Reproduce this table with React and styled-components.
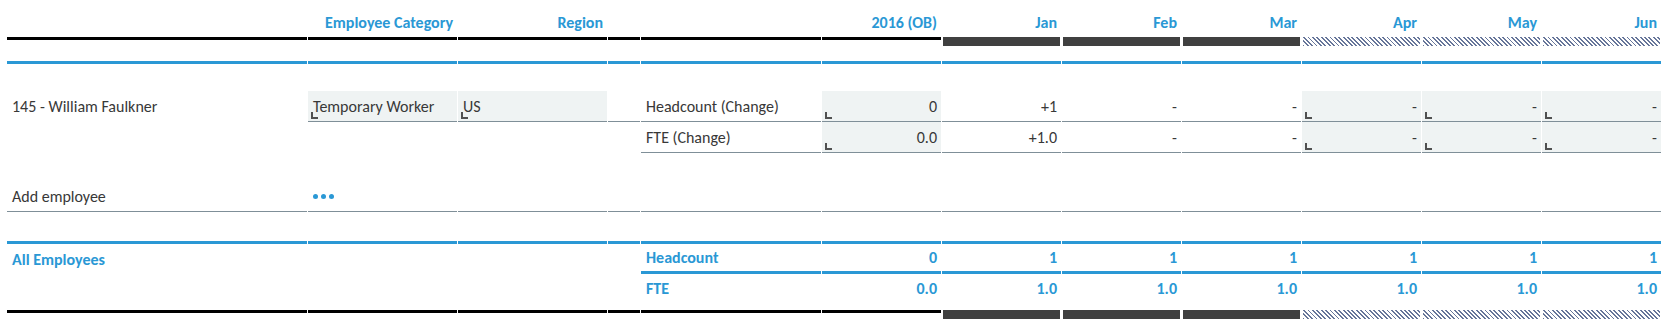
import React from "react";
import styled, { createGlobalStyle, css } from "styled-components";

const BLUE = "#2a98d5";
const COLS = "300px 149px 149px 32px 180px 119px repeat(6, 119px)";

const GlobalStyle = createGlobalStyle`
  body {
    margin: 0;
    background: #fff;
  }
`;

const Sheet = styled.div`
  display: flex;
  flex-direction: column;
  padding-left: 7px;
  font-family: Calibri, Carlito, Lato, "Liberation Sans", sans-serif;
  font-size: 16px;
  line-height: 19px;
  color: #383838;
`;

const Row = styled.div`
  display: grid;
  grid-template-columns: ${COLS};
  column-gap: 1px;
  height: ${(p) => p.$h}px;
  margin-top: ${(p) => p.$top || 0}px;
  align-items: start;
`;

const HeadCell = styled.div`
  display: flex;
  align-items: flex-end;
  justify-content: flex-end;
  height: 37px;
  padding: 0 4px 5px;
  box-sizing: border-box;
  font-weight: 700;
  color: ${BLUE};
  white-space: nowrap;
`;

const rules = {
  black: css`
    height: 3px;
    background: #000;
  `,
  blue: css`
    height: 3px;
    background: ${BLUE};
  `,
  solid: css`
    height: 9px;
    margin: 0 1px;
    background: #404040;
  `,
  hatch: css`
    height: 9px;
    margin: 0 1px;
    background: repeating-linear-gradient(
      45deg,
      #67769a 0 1.3px,
      #fff 1.3px 3.1px
    );
  `,
};

const Rule = styled.div`
  ${(p) => rules[p.$kind]}
`;

const lines = {
  grey: "1px solid #7f8f98",
  blue: `3px solid ${BLUE}`,
};

const Cell = styled.div`
  position: relative;
  display: flex;
  align-items: ${(p) => (p.$valign === "top" ? "flex-start" : "center")};
  justify-content: ${(p) => (p.$right ? "flex-end" : "flex-start")};
  height: 100%;
  box-sizing: border-box;
  padding: 0 ${(p) => (p.$right ? "4px" : "0")} 0
    ${(p) => (p.$right ? "0" : "5px")};
  background: ${(p) => (p.$input ? "#eff3f3" : "transparent")};
  border-bottom: ${(p) => (p.$line ? lines[p.$line] : "none")};
  font-weight: ${(p) => (p.$total ? 700 : 400)};
  color: ${(p) => (p.$total ? BLUE : "#383838")};
  white-space: nowrap;
`;

const Corner = styled.span`
  position: absolute;
  left: 3px;
  bottom: 2px;
  width: 5px;
  height: 5px;
  border-left: 2px solid #505050;
  border-bottom: 2px solid #505050;
`;

const Dots = styled.div`
  display: flex;
  gap: 3px;
  padding-top: 1px;
`;

const Dot = styled.span`
  width: 5px;
  height: 5px;
  border-radius: 50%;
  background: ${BLUE};
`;

const headers = ["", "Employee Category", "Region", "", "", "2016 (OB)", "Jan", "Feb", "Mar", "Apr", "May", "Jun"];
const ruleKinds = ["black", "black", "black", "black", "black", "black", "solid", "solid", "solid", "hatch", "hatch", "hatch"];
const months = ["Jan", "Feb", "Mar", "Apr", "May", "Jun"];

// values per month for the change rows; first three months are plain, last three are inputs
const changeRows = [
  { label: "Headcount (Change)", ob: "0", values: ["+1", "-", "-", "-", "-", "-"] },
  { label: "FTE (Change)", ob: "0.0", values: ["+1.0", "-", "-", "-", "-", "-"] },
];

const InputCell = ({ children, right, line = "grey" }) => (
  <Cell $input $right={right} $line={line}>
    {children}
    <Corner />
  </Cell>
);

function RuleRow({ top }) {
  return (
    <Row $h={9} $top={top}>
      {ruleKinds.map((kind, i) => (
        <Rule key={i} $kind={kind} />
      ))}
    </Row>
  );
}

function ChangeRow({ row, first }) {
  return (
    <Row $h={31} $top={first ? 27 : 0}>
      {first ? (
        <>
          <Cell>145 - William Faulkner</Cell>
          <InputCell>Temporary Worker</InputCell>
          <InputCell>US</InputCell>
          <Cell $line="grey" />
        </>
      ) : (
        <>
          <Cell />
          <Cell />
          <Cell />
          <Cell />
        </>
      )}
      <Cell $line="grey">{row.label}</Cell>
      <InputCell right>{row.ob}</InputCell>
      {row.values.map((v, i) =>
        i < 3 ? (
          <Cell key={i} $right $line="grey">
            {v}
          </Cell>
        ) : (
          <InputCell key={i} right>
            {v}
          </InputCell>
        )
      )}
    </Row>
  );
}

export default function App() {
  return (
    <>
      <GlobalStyle />
      <Sheet>
        <Row $h={37}>
          {headers.map((h, i) => (
            <HeadCell key={i}>{h}</HeadCell>
          ))}
        </Row>
        <RuleRow />

        <Row $h={3} $top={15}>
          {ruleKinds.map((_, i) => (
            <Rule key={i} $kind="blue" />
          ))}
        </Row>

        {changeRows.map((row, i) => (
          <ChangeRow key={row.label} row={row} first={i === 0} />
        ))}

        <Row $h={31} $top={28}>
          <Cell $line="grey">Add employee</Cell>
          <Cell $line="grey">
            <Dots>
              <Dot />
              <Dot />
              <Dot />
            </Dots>
          </Cell>
          {ruleKinds.slice(2).map((_, i) => (
            <Cell key={i} $line="grey" />
          ))}
        </Row>

        <Row $h={3} $top={29}>
          {ruleKinds.map((_, i) => (
            <Rule key={i} $kind="blue" />
          ))}
        </Row>

        <Row $h={30}>
          <Cell $total>All Employees</Cell>
          <Cell />
          <Cell />
          <Cell />
          <Cell $total $line="blue">
            Headcount
          </Cell>
          <Cell $total $right $line="blue">
            0
          </Cell>
          {months.map((m) => (
            <Cell key={m} $total $right $line="blue">
              1
            </Cell>
          ))}
        </Row>

        <Row $h={28}>
          <Cell />
          <Cell />
          <Cell />
          <Cell />
          <Cell $total>FTE</Cell>
          <Cell $total $right>
            0.0
          </Cell>
          {months.map((m) => (
            <Cell key={m} $total $right>
              1.0
            </Cell>
          ))}
        </Row>

        <RuleRow top={8} />
      </Sheet>
    </>
  );
}
